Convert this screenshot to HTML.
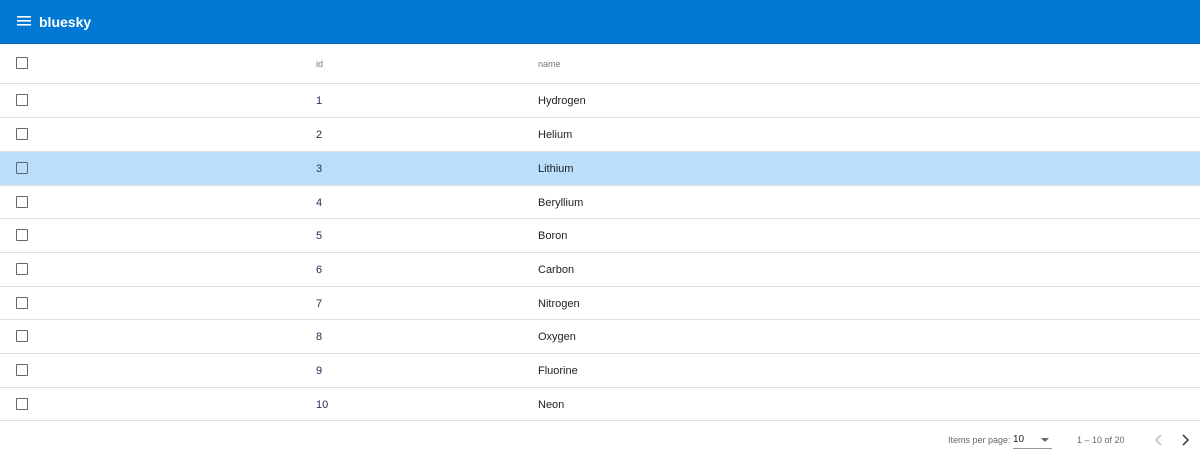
<!DOCTYPE html>
<html><head><style>
body{margin:0;width:1200px;height:460px;font-family:"Liberation Sans",Arial,sans-serif;background:#fff;position:relative;overflow:hidden}
.bar{position:absolute;left:0;top:0;width:1200px;height:43px;background:#0078d4;border-bottom:1px solid #0c62b0}
.bar .t{position:absolute;left:39px;top:14px;color:#fff;font-weight:bold;font-size:14px}
.row{position:absolute;left:0;width:1200px;border-bottom:1px solid #e0e0e0;font-size:11px;color:#222}
.row span{position:absolute}
.cb{position:absolute;left:16px;width:10px;height:10px;border:1.5px solid #666;border-radius:1px}
.hdr{color:#777;font-size:9px}
.n{color:#2a2a5a}
</style></head><body>
<div class="bar">
<svg style="position:absolute;left:17px;top:15px" width="15" height="12"><rect x="0" y="1" width="14" height="1.6" fill="#fff"/><rect x="0" y="5" width="14" height="1.6" fill="#fff"/><rect x="0" y="9" width="14" height="1.6" fill="#fff"/></svg>
<div class="t">bluesky</div></div>
<div class="row hdr" style="top:44px;height:39px"><div class="cb" style="top:13px"></div><span style="left:316px;top:15px">id</span><span style="left:538px;top:15px">name</span></div>
<div class="row" style="top:84px;height:33px"><div class="cb" style="top:10px"></div><span class="n" style="left:316px;top:11px">1</span><span style="left:538px;top:11px">Hydrogen</span></div>
<div class="row" style="top:118px;height:33px"><div class="cb" style="top:10px"></div><span class="n" style="left:316px;top:11px">2</span><span style="left:538px;top:11px">Helium</span></div>
<div class="row" style="top:152px;height:33px;background:#bbdefb"><div class="cb" style="top:10px"></div><span class="n" style="left:316px;top:11px">3</span><span style="left:538px;top:11px">Lithium</span></div>
<div class="row" style="top:186px;height:32px"><div class="cb" style="top:10px"></div><span class="n" style="left:316px;top:11px">4</span><span style="left:538px;top:11px">Beryllium</span></div>
<div class="row" style="top:219px;height:33px"><div class="cb" style="top:10px"></div><span class="n" style="left:316px;top:11px">5</span><span style="left:538px;top:11px">Boron</span></div>
<div class="row" style="top:253px;height:33px"><div class="cb" style="top:10px"></div><span class="n" style="left:316px;top:11px">6</span><span style="left:538px;top:11px">Carbon</span></div>
<div class="row" style="top:287px;height:32px"><div class="cb" style="top:10px"></div><span class="n" style="left:316px;top:11px">7</span><span style="left:538px;top:11px">Nitrogen</span></div>
<div class="row" style="top:320px;height:33px"><div class="cb" style="top:10px"></div><span class="n" style="left:316px;top:11px">8</span><span style="left:538px;top:11px">Oxygen</span></div>
<div class="row" style="top:354px;height:33px"><div class="cb" style="top:10px"></div><span class="n" style="left:316px;top:11px">9</span><span style="left:538px;top:11px">Fluorine</span></div>
<div class="row" style="top:388px;height:32px"><div class="cb" style="top:10px"></div><span class="n" style="left:316px;top:11px">10</span><span style="left:538px;top:11px">Neon</span></div>
<div style="position:absolute;top:435px;left:948px;font-size:9px;color:#666">Items per page:</div>
<div style="position:absolute;top:434px;left:1013px;font-size:10px;color:#222">10</div>
<div style="position:absolute;top:448px;left:1013px;width:39px;height:1px;background:#999"></div>
<div style="position:absolute;top:438px;left:1041px;width:0;height:0;border-left:4px solid transparent;border-right:4px solid transparent;border-top:4px solid #666"></div>
<div style="position:absolute;top:435px;left:1077px;font-size:9px;color:#666">1 – 10 of 20</div>
<svg style="position:absolute;left:1154px;top:433px" width="10" height="14"><path d="M7 2 L2 7 L7 12" stroke="#bbb" stroke-width="1.5" fill="none"/></svg>
<svg style="position:absolute;left:1180px;top:433px" width="10" height="14"><path d="M3 2 L8 7 L3 12" stroke="#333" stroke-width="1.5" fill="none"/></svg>
</body></html>
